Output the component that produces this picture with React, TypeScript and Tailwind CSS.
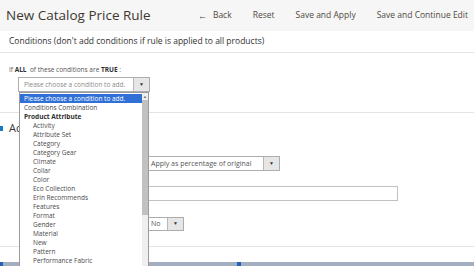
import React from "react";

const attributes = [
  "Activity",
  "Attribute Set",
  "Category",
  "Category Gear",
  "Climate",
  "Collar",
  "Color",
  "Eco Collection",
  "Erin Recommends",
  "Features",
  "Format",
  "Gender",
  "Material",
  "New",
  "Pattern",
  "Performance Fabric",
];

const Arrow = () => (
  <span className="flex items-center justify-center w-[16px] h-full bg-[#e6e6e6] border-l border-[#b8b8b8] text-[5px] text-[#333]">
    ▼
  </span>
);

const App = () => {
  return (
    <div className="relative w-[474px] h-[266px] overflow-hidden bg-white font-['Open_Sans',sans-serif] text-[#303030] whitespace-nowrap">
      {/* page header */}
      <div className="flex items-center h-[31px] bg-[#f6f6f6] pl-[6px] pr-[6px]">
        <h1 className="text-[13.5px] leading-none text-[#41362f]">New Catalog Price Rule</h1>
        <div className="ml-auto flex items-center gap-[21px] text-[8.5px] text-[#514943]">
          <span className="flex items-center gap-[6px]">
            <span className="text-[9px]">←</span>Back
          </span>
          <span>Reset</span>
          <span>Save and Apply</span>
          <span>Save and Continue Edit</span>
        </div>
      </div>

      {/* conditions */}
      <div className="flex items-center h-[22px] px-[9px] border-b border-[#e3e3e3] text-[8.5px]">
        Conditions (don't add conditions if rule is applied to all products)
      </div>
      <div className="pl-[9px] mt-[12px] text-[6.5px] leading-[9px] text-[#555]">
        If <b className="text-[#303030]">ALL</b>&nbsp; of these conditions are{" "}
        <b className="text-[#303030]">TRUE</b> :
      </div>
      <div className="ml-[18px] mt-[3px] flex w-[132px] h-[15px] border border-[#adadad] bg-white">
        <span className="flex-1 pl-[5px] text-[6.5px] leading-[13px] text-[#8a8a8a]">
          Please choose a condition to add.
        </span>
        <Arrow />
      </div>

      {/* actions */}
      <div className="mt-[20px] border-b border-[#e3e3e3]" />
      <div className="flex items-center mt-[8px]">
        <span className="w-[3px] h-[5px] bg-[#1979c3]" />
        <span className="ml-[6px] text-[11px] leading-[14px] text-[#41362f]">Actions</span>
      </div>
      <div className="pl-[148px] mt-[21px]">
        <div className="flex w-[132px] h-[15px] border border-[#adadad]">
          <span className="flex-1 pl-[2px] text-[7px] leading-[13px] text-[#555]">
            Apply as percentage of original
          </span>
          <Arrow />
        </div>
      </div>
      <div className="pl-[148px] mt-[15px]">
        <div className="w-[250px] h-[15px] border border-[#c2c2c2]" />
      </div>
      <div className="pl-[148px] mt-[16px]">
        <div className="flex w-[36px] h-[14px] border border-[#adadad]">
          <span className="flex-1 pl-[2px] text-[7px] leading-[12px] text-[#555]">No</span>
          <Arrow />
        </div>
      </div>
      <div className="mt-[15px] border-b border-[#e3e3e3]" />
      <div className="relative mt-[15px] h-[4px] bg-[#a3afbf]">
        <span className="absolute left-0 top-0 w-[3px] h-[4px] bg-[#1f63b8]" />
        <span className="absolute left-[237px] top-0 w-[4px] h-[4px] bg-[#1f63b8]" />
      </div>

      {/* open dropdown list */}
      <div className="absolute left-[19px] top-[92px] w-[130px] h-[180px] flex border border-[#9a9a9a] bg-white text-[6.5px] leading-[9px] text-[#4a4a4a]">
        <div className="flex-1 pt-[1px]">
          <div className="bg-[#2f6fd6] text-white pl-[4px] h-[9px]">
            Please choose a condition to add.
          </div>
          <div className="pl-[4px]">Conditions Combination</div>
          <div className="pl-[4px] font-bold text-[#303030]">Product Attribute</div>
          {attributes.map((a) => (
            <div key={a} className="pl-[13px]">
              {a}
            </div>
          ))}
        </div>
        <div className="w-[6px] flex flex-col bg-[#efefef]">
          <span className="h-[7px] text-[4px] leading-[7px] text-center text-[#666]">▲</span>
          <span className="h-[115px] bg-[#c1c1c1]" />
        </div>
      </div>
    </div>
  );
};

export default App;
